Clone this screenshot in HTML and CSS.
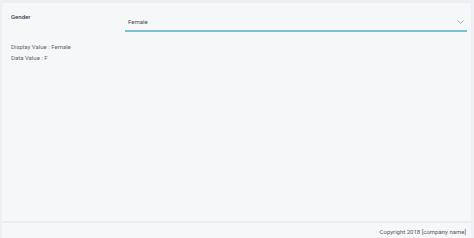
FILE: index.html
```html
<!DOCTYPE html>
<html lang="en">
<head>
  <meta charset="UTF-8">
  <title>Dropdown</title>
  <link rel="stylesheet" href="styles.css">
</head>
<body>
  <div class="page">
    <div class="topbar"></div>

    <main class="content">
      <div class="field-row">
        <label class="field-label">Gender</label>
        <div class="select">
          <span class="select-value">Female</span>
          <svg class="chevron" width="7" height="4" viewBox="0 0 7 4">
            <path d="M0.5 0.5 L3.5 3.3 L6.5 0.5" fill="none" stroke="#9a9ea5" stroke-width="0.9"/>
          </svg>
        </div>
      </div>

      <div class="values">
        <p>Display Value : Female</p>
        <p>Data Value : F</p>
      </div>
    </main>

    <footer class="footer">Copyright 2018 [company name]</footer>
  </div>
</body>
</html>
```

FILE: styles.css
```css
html, body {
  margin: 0;
  padding: 0;
  height: 100%;
  background: #f6f7f9;
  font-family: Roboto, "Liberation Sans", sans-serif;
  color: #55585d;
}

.page {
  height: 238px;
  display: flex;
  flex-direction: column;
  box-sizing: border-box;
  border-left: 2px solid #eef0f3;
  border-right: 3px solid #eef0f3;
}

/* faixa fina no topo */
.topbar {
  height: 3px;
  background: #eceef1;
}

.content {
  flex: 1;
  padding: 9px 4px 0 9px;
}

.field-row {
  display: flex;
  align-items: flex-start;
}

.field-label {
  width: 114px;
  font-size: 6px;
  font-weight: 500;
  color: #3e4146;
  padding-top: 1px;
}

.select {
  flex: 1;
  display: flex;
  align-items: center;
  justify-content: space-between;
  height: 18px;
  padding: 0 3px 0 3px;
  border-bottom: 2px solid #7fc0d0;
}

.select-value {
  font-size: 6px;
  color: #4a4d52;
}

.chevron {
  margin-top: 1px;
}

.values {
  margin-top: 12px;
  font-size: 6px;
  color: #63666b;
}

.values p {
  margin: 0 0 5px;
  line-height: 6px;
}

.footer {
  height: 17px;
  box-sizing: border-box;
  border-top: 2px solid #eceef1;
  font-size: 6px;
  color: #55585d;
  text-align: right;
  padding: 5px 5px 0 0;
}
```
